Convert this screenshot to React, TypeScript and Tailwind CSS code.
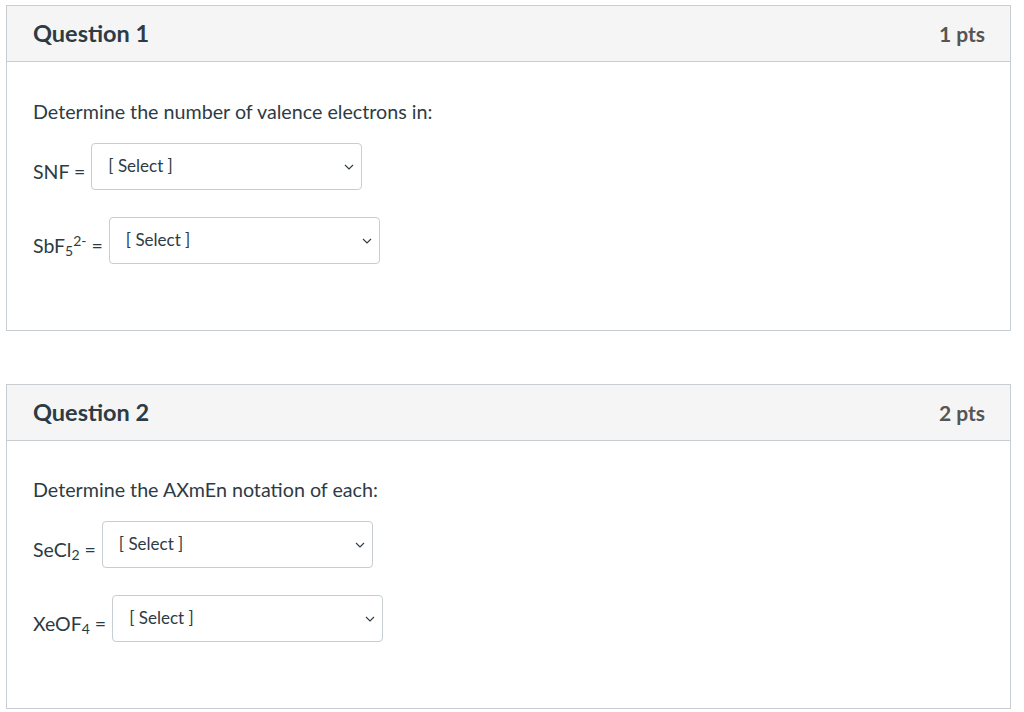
import React from "react";

function Chevron() {
  return (
    <svg width="10" height="6" viewBox="0 0 10 6" className="shrink-0">
      <path d="M1 1 L5 5 L9 1" fill="none" stroke="#2d3b45" strokeWidth="1.1" />
    </svg>
  );
}

function SelectBox() {
  return (
    <div className="flex h-[47px] w-[271px] items-center justify-between rounded-[4px] border border-[#c7cdd1] bg-white pl-[16px] pr-[7px] text-[17px] text-[#2d3b45]">
      <span className="-mt-[2px]">[ Select ]</span>
      <Chevron />
    </div>
  );
}

function Row({ label, first }: { label: React.ReactNode; first?: boolean }) {
  return (
    <div className={`flex h-[47px] items-center ${first ? "mt-[17px]" : "mt-[27px]"}`}>
      <span className="mr-[6px] pt-[9px] text-[19.5px] leading-[27px] text-[#2d3b45]">{label}</span>
      <SelectBox />
    </div>
  );
}

function Card({
  title,
  pts,
  prompt,
  rows,
  bodyTop,
}: {
  title: string;
  pts: string;
  prompt: string;
  rows: React.ReactNode[];
  bodyTop: string;
}) {
  return (
    <div className="w-[1005px] border border-[#c7cdd1] bg-white">
      <div className="flex h-[56px] items-center justify-between border-b border-[#c7cdd1] bg-[#f5f5f5] pl-[26px] pr-[25px]">
        <span className="text-[23.5px] font-bold text-[#2d3b45]">{title}</span>
        <span className="text-[21px] font-bold text-[#555555]">{pts}</span>
      </div>
      <div className={`px-[26px] pb-[66px] ${bodyTop}`}>
        <p className="text-[19.7px] leading-[28px] text-[#2d3b45]">{prompt}</p>
        {rows.map((r, i) => (
          <Row key={i} label={r} first={i === 0} />
        ))}
      </div>
    </div>
  );
}

export default function App() {
  return (
    <div
      className="min-h-[712px] w-[1024px] bg-white pl-[6px] pt-[5px]"
      style={{ fontFamily: "Lato, 'Liberation Sans', sans-serif" }}
    >
      <Card
        title="Question 1"
        pts="1 pts"
        prompt="Determine the number of valence electrons in:"
        bodyTop="pt-[36px]"
        rows={[
          <>SNF =</>,
          <>
            SbF<sub className="text-[14px] leading-none">5</sub>
            <sup className="text-[14px] leading-none">2-</sup> =
          </>,
        ]}
      />
      <div className="h-[53px]" />
      <Card
        title="Question 2"
        pts="2 pts"
        prompt="Determine the AXmEn notation of each:"
        bodyTop="pt-[35px]"
        rows={[
          <>
            SeCl<sub className="text-[14px] leading-none">2</sub> =
          </>,
          <>
            XeOF<sub className="text-[14px] leading-none">4</sub> =
          </>,
        ]}
      />
    </div>
  );
}
